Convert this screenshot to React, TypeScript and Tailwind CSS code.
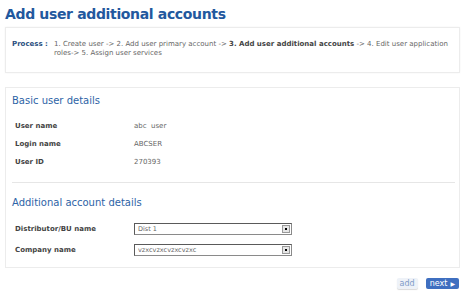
import React from "react";

const font = { fontFamily: '"DejaVu Sans", Verdana, sans-serif' };

function Select({ value }: { value: string }) {
  return (
    <div className="flex h-[12px] w-[158px] items-center border border-[#8a8a8a] border-t-[#5a5a5a] border-l-[#5a5a5a] bg-white">
      <span className="flex-1 pl-[3px] text-[6.5px] leading-none text-[#666]">{value}</span>
      <span className="m-[1px] flex h-[8px] w-[8px] items-center justify-center border border-[#999] bg-[#e6e6e6]">
        <span className="h-[2px] w-[2px] bg-black" />
      </span>
    </div>
  );
}

export default function App() {
  return (
    <div className="h-[295px] w-[474px] bg-white" style={font}>
      <div className="px-[5px] pt-[5px]">
        <h1 className="text-[14px] font-bold leading-[19px] tracking-[-0.35px] text-[#22589e]">Add user additional accounts</h1>
        <div className="mt-[3px] w-[455px] border border-[#ececec] px-[6px] pt-[12px] pb-[14px] shadow-[0_0_2px_rgba(0,0,0,0.05)]">
          <div className="flex text-[7px] leading-[9px]">
            <span className="w-[42px] shrink-0 font-bold text-[#2b4f80]">Process :</span>
            <span className="text-[#666]">
              1. Create user -&gt; 2. Add user primary account -&gt; <b className="text-[#444]">3. Add user additional accounts</b> -&gt; 4. Edit user application roles-&gt; 5. Assign user services
            </span>
          </div>
        </div>
        <div className="mt-[14px] w-[455px] border border-[#ececec] px-[6px] pt-[6px] pb-[11px]">
          <h2 className="text-[10px] leading-[14px] text-[#2d63a6]">Basic user details</h2>
          <div className="mt-[14px] flex flex-col gap-[9px] pl-[3px] text-[7px] leading-[9px]">
            <div className="flex"><span className="w-[119px] font-bold text-[#444]">User name</span><span className="text-[#666]">abc&nbsp; user</span></div>
            <div className="flex"><span className="w-[119px] font-bold text-[#444]">Login name</span><span className="text-[#666]">ABCSER</span></div>
            <div className="flex"><span className="w-[119px] font-bold text-[#444]">User ID</span><span className="text-[#666]">270393</span></div>
          </div>
          <div className="mt-[15px] mr-[-2px] border-t border-[#e6e6e6]" />
          <h2 className="mt-[13px] text-[10px] leading-[14px] text-[#2d63a6]">Additional account details</h2>
          <div className="mt-[13px] flex flex-col gap-[9px] pl-[3px] text-[7px] leading-[9px]">
            <div className="flex items-center"><span className="w-[119px] font-bold text-[#444]">Distributor/BU name</span><Select value="Dist 1" /></div>
            <div className="flex items-center"><span className="w-[119px] font-bold text-[#444]">Company name</span><Select value="vzxcvzxcvzxcvzxc" /></div>
          </div>
        </div>
        <div className="mt-[10px] flex w-[455px] justify-end gap-[8px] pr-[1px]">
          <span className="rounded-[2px] bg-[#eef2f8] px-[3px] text-[8px] leading-[11px] text-[#7f9cc8] shadow-[0_1px_1px_rgba(0,0,0,0.15)]">add</span>
          <span className="flex items-center gap-[3px] rounded-[2px] bg-[#3f6fc0] px-[4px] text-[8px] leading-[11px] text-white">next<span className="text-[6px]">▶</span></span>
        </div>
      </div>
    </div>
  );
}
